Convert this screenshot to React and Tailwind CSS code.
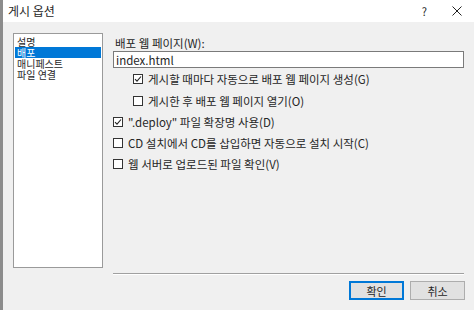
import React from "react";

const font = { fontFamily: '"Noto Sans CJK KR", "Noto Sans", sans-serif' };

function Check({ checked }) {
  return (
    <div className="w-[10px] h-[10px] border border-[#333333] bg-white flex items-center justify-center shrink-0">
      {checked && (
        <svg width="8" height="8" viewBox="0 0 8 8">
          <path d="M1 4.2 L3 6.2 L7 1.5" fill="none" stroke="#222" strokeWidth="1.1" />
        </svg>
      )}
    </div>
  );
}

function Row({ checked, children, indent, className = "h-[21px]" }) {
  return (
    <div className={`flex items-center gap-[5px] ${indent ? "pl-[20px]" : ""} ${className}`}>
      <Check checked={checked} />
      <span className="text-[11.5px] leading-[14px] text-[#262626] whitespace-nowrap">{children}</span>
    </div>
  );
}

export default function App() {
  return (
    <div className="w-[474px] h-[310px] flex overflow-hidden" style={font}>
      <div className="w-[3px] bg-[#8c8c8c] shrink-0" />
      <div className="flex-1 flex flex-col">
        <div className="h-[22px] bg-white flex items-center pl-[5px] pr-[12px] shrink-0">
          <span className="text-[12px] leading-[14px] text-[#262626]">게시 옵션</span>
          <div className="flex-1" />
          <span className="text-[11px] leading-[14px] text-[#262626] mr-[25px]">?</span>
          <svg width="10" height="10" viewBox="0 0 10 10">
            <path d="M0.5 0.5 L9.5 9.5 M9.5 0.5 L0.5 9.5" stroke="#222" strokeWidth="1" />
          </svg>
        </div>
        <div className="flex-1 bg-[#f0f0f0] flex pt-[11px] pl-[10px] pr-[10px] pb-[10px] gap-[10px]">
          <div className="w-[90px] h-[235px] bg-white border border-[#9a9a9a] pt-[2px] px-[1px] shrink-0">
            <div className="h-[11px] text-[10px] leading-[11px] pl-[2px] text-[#262626]">설명</div>
            <div className="h-[11px] text-[10px] leading-[11px] pl-[2px] bg-[#0078d7] text-white">배포</div>
            <div className="h-[11px] text-[10px] leading-[11px] pl-[2px] text-[#262626]">매니페스트</div>
            <div className="h-[11px] text-[10px] leading-[11px] pl-[2px] text-[#262626]">파일 연결</div>
          </div>
          <div className="flex-1 flex flex-col">
            <div className="flex-1 flex flex-col">
              <div className="mt-[3px] h-[14px] pl-[2px] text-[11.5px] leading-[14px] text-[#262626]">배포 웹 페이지(W):</div>
              <div className="mt-[1px] h-[17px] bg-white border border-[#7a7a7a] flex items-center pl-[2px] text-[11.5px] leading-[14px] text-[#262626]">
                index.html
              </div>
              <Row checked indent>게시할 때마다 자동으로 배포 웹 페이지 생성(G)</Row>
              <Row indent className="mt-[2px] h-[20px]">게시한 후 배포 웹 페이지 열기(O)</Row>
              <Row checked>".deploy" 파일 확장명 사용(D)</Row>
              <Row>CD 설치에서 CD를 삽입하면 자동으로 설치 시작(C)</Row>
              <Row>웹 서버로 업로드된 파일 확인(V)</Row>
            </div>
            <div className="h-[2px] border-t border-[#a0a0a0] bg-white" />
            <div className="mt-[6px] flex justify-end gap-[6px] -mr-[1px]">
              <div className="w-[55px] h-[19px] bg-[#e1e1e1] border-2 border-[#0078d7] flex items-center justify-center text-[11px] leading-[14px] text-[#262626]">
                확인
              </div>
              <div className="w-[55px] h-[19px] bg-[#e1e1e1] border border-[#adadad] flex items-center justify-center text-[11px] leading-[14px] text-[#262626]">
                취소
              </div>
            </div>
          </div>
        </div>
      </div>
    </div>
  );
}
